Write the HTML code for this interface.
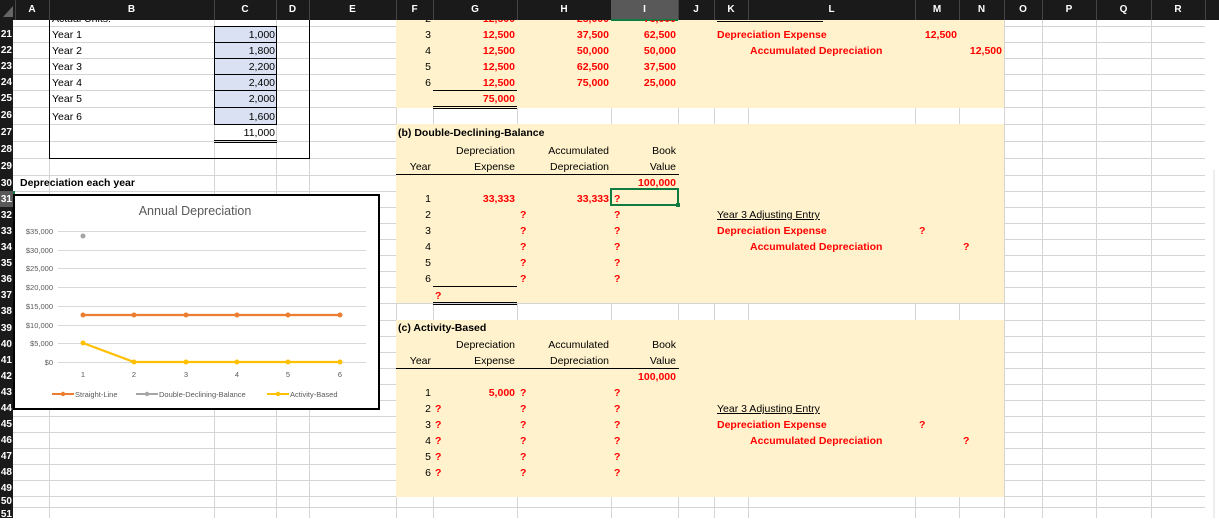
<!DOCTYPE html>
<html><head><meta charset="utf-8"><style>
body{margin:0;width:1219px;height:518px;overflow:hidden;background:#fff;position:relative;font-family:"Liberation Sans",sans-serif;}
.t{position:absolute;font-size:10.5px;line-height:12px;white-space:nowrap;color:#000;}
.r{color:#f00;font-weight:bold;}
.R{text-align:right;}
.h{position:absolute;top:0;height:20px;line-height:20px;color:#fff;font-size:10px;font-weight:bold;text-align:center;}
.rn{position:absolute;left:-3px;width:15px;color:#fff;font-size:10px;font-weight:bold;text-align:right;line-height:12px;}
.clip{position:absolute;left:0;top:20px;width:1219px;height:6px;overflow:hidden;}
.clip .t{top:-7px;}
</style></head><body>
<svg width="1219" height="518" style="position:absolute;left:0;top:0">
<g stroke="#d4d4d4" stroke-width="1">
<line x1="13" x2="1205" y1="26.5" y2="26.5"/><line x1="13" x2="1205" y1="42.5" y2="42.5"/><line x1="13" x2="1205" y1="58.5" y2="58.5"/><line x1="13" x2="1205" y1="74.5" y2="74.5"/><line x1="13" x2="1205" y1="90.5" y2="90.5"/><line x1="13" x2="1205" y1="107.5" y2="107.5"/><line x1="13" x2="1205" y1="124.5" y2="124.5"/><line x1="13" x2="1205" y1="141.5" y2="141.5"/><line x1="13" x2="1205" y1="158.5" y2="158.5"/><line x1="13" x2="1205" y1="175.5" y2="175.5"/><line x1="13" x2="1205" y1="191.5" y2="191.5"/><line x1="13" x2="1205" y1="207.5" y2="207.5"/><line x1="13" x2="1205" y1="223.5" y2="223.5"/><line x1="13" x2="1205" y1="239.5" y2="239.5"/><line x1="13" x2="1205" y1="255.5" y2="255.5"/><line x1="13" x2="1205" y1="271.5" y2="271.5"/><line x1="13" x2="1205" y1="287.5" y2="287.5"/><line x1="13" x2="1205" y1="303.5" y2="303.5"/><line x1="13" x2="1205" y1="320.5" y2="320.5"/><line x1="13" x2="1205" y1="336.5" y2="336.5"/><line x1="13" x2="1205" y1="352.5" y2="352.5"/><line x1="13" x2="1205" y1="368.5" y2="368.5"/><line x1="13" x2="1205" y1="384.5" y2="384.5"/><line x1="13" x2="1205" y1="400.5" y2="400.5"/><line x1="13" x2="1205" y1="416.5" y2="416.5"/><line x1="13" x2="1205" y1="432.5" y2="432.5"/><line x1="13" x2="1205" y1="448.5" y2="448.5"/><line x1="13" x2="1205" y1="464.5" y2="464.5"/><line x1="13" x2="1205" y1="480.5" y2="480.5"/><line x1="13" x2="1205" y1="496.5" y2="496.5"/><line x1="13" x2="1205" y1="507.5" y2="507.5"/>
<line y1="20" y2="518" x1="49.5" x2="49.5"/><line y1="20" y2="518" x1="214.5" x2="214.5"/><line y1="20" y2="518" x1="276.5" x2="276.5"/><line y1="20" y2="518" x1="309.5" x2="309.5"/><line y1="20" y2="518" x1="396.5" x2="396.5"/><line y1="20" y2="518" x1="433.5" x2="433.5"/><line y1="20" y2="518" x1="517.5" x2="517.5"/><line y1="20" y2="518" x1="611.5" x2="611.5"/><line y1="20" y2="518" x1="678.5" x2="678.5"/><line y1="20" y2="518" x1="714.5" x2="714.5"/><line y1="20" y2="518" x1="748.5" x2="748.5"/><line y1="20" y2="518" x1="915.5" x2="915.5"/><line y1="20" y2="518" x1="959.5" x2="959.5"/><line y1="20" y2="518" x1="1004.5" x2="1004.5"/><line y1="20" y2="518" x1="1042.5" x2="1042.5"/><line y1="20" y2="518" x1="1096.5" x2="1096.5"/><line y1="20" y2="518" x1="1151.5" x2="1151.5"/><line y1="20" y2="518" x1="1205.5" x2="1205.5"/>
</g>
<rect x="1205" y="20" width="14" height="498" fill="#fff"/>
<rect x="1213" y="170" width="2" height="348" fill="#eee"/>
<rect x="396" y="20" width="608" height="88" fill="#fff2cc"/>
<rect x="396" y="124" width="608" height="179" fill="#fff2cc"/>
<rect x="396" y="320" width="608" height="177" fill="#fff2cc"/>
<rect x="214" y="26" width="62" height="98" fill="#d9e1f2"/>
<g stroke="#000" stroke-width="1" fill="none">
<rect x="214.5" y="26.5" width="62" height="16"/><rect x="214.5" y="42.5" width="62" height="16"/><rect x="214.5" y="58.5" width="62" height="16"/><rect x="214.5" y="74.5" width="62" height="16"/><rect x="214.5" y="90.5" width="62" height="17"/><rect x="214.5" y="107.5" width="62" height="17"/>
<path d="M49.5 20V158.5H309.5V20"/>
<line x1="214" x2="277" y1="140.5" y2="140.5"/><line x1="214" x2="277" y1="142.5" y2="142.5"/>
<line x1="433" x2="517" y1="90.5" y2="90.5"/><line x1="433" x2="517" y1="106.5" y2="106.5"/><line x1="433" x2="517" y1="108.5" y2="108.5"/>
<line x1="396" x2="679" y1="174.5" y2="174.5"/>
<line x1="433" x2="517" y1="286.5" y2="286.5"/><line x1="433" x2="517" y1="302.5" y2="302.5"/><line x1="433" x2="517" y1="304.5" y2="304.5"/>
<line x1="396" x2="679" y1="368.5" y2="368.5"/>
<line x1="717" x2="823" y1="21.5" y2="21.5"/>
</g>
<rect x="611" y="189" width="67" height="16" fill="none" stroke="#107c41" stroke-width="2"/>
<rect x="676" y="203" width="4" height="4" fill="#107c41"/>
<rect x="0" y="0" width="1219" height="20" fill="#1a1a1a"/>
<rect x="611" y="0" width="67" height="20" fill="#595959"/>
<rect x="611" y="19" width="67" height="2" fill="#107c41"/>
<rect x="0" y="20" width="13" height="498" fill="#1a1a1a"/>
<rect x="0" y="191" width="13" height="16" fill="#595959"/>
<rect x="13" y="191" width="2" height="16" fill="#107c41"/>
<polygon points="3,17 13,17 13,6" fill="#666"/>
<g stroke="#444"><line x1="15.5" x2="15.5" y1="0" y2="20"/><line x1="49.5" x2="49.5" y1="0" y2="20"/><line x1="214.5" x2="214.5" y1="0" y2="20"/><line x1="276.5" x2="276.5" y1="0" y2="20"/><line x1="309.5" x2="309.5" y1="0" y2="20"/><line x1="396.5" x2="396.5" y1="0" y2="20"/><line x1="433.5" x2="433.5" y1="0" y2="20"/><line x1="517.5" x2="517.5" y1="0" y2="20"/><line x1="678.5" x2="678.5" y1="0" y2="20"/><line x1="714.5" x2="714.5" y1="0" y2="20"/><line x1="748.5" x2="748.5" y1="0" y2="20"/><line x1="915.5" x2="915.5" y1="0" y2="20"/><line x1="959.5" x2="959.5" y1="0" y2="20"/><line x1="1004.5" x2="1004.5" y1="0" y2="20"/><line x1="1042.5" x2="1042.5" y1="0" y2="20"/><line x1="1096.5" x2="1096.5" y1="0" y2="20"/><line x1="1151.5" x2="1151.5" y1="0" y2="20"/><line x1="1205.5" x2="1205.5" y1="0" y2="20"/></g>
</svg>
<div class="clip">
<div class="t" style="left:52px">Actual Units:</div>
<div class="t R" style="right:788px">2</div>
<div class="t r R" style="right:704px">12,500</div><div class="t r R" style="right:610px">25,000</div><div class="t r R" style="right:543px">75,000</div>
</div>
<div class="h" style="left:15px;width:34px">A</div><div class="h" style="left:49px;width:165px">B</div><div class="h" style="left:214px;width:62px">C</div><div class="h" style="left:276px;width:33px">D</div><div class="h" style="left:309px;width:87px">E</div><div class="h" style="left:396px;width:37px">F</div><div class="h" style="left:433px;width:84px">G</div><div class="h" style="left:517px;width:94px">H</div><div class="h" style="left:611px;width:67px">I</div><div class="h" style="left:678px;width:36px">J</div><div class="h" style="left:714px;width:34px">K</div><div class="h" style="left:748px;width:167px">L</div><div class="h" style="left:915px;width:44px">M</div><div class="h" style="left:959px;width:45px">N</div><div class="h" style="left:1004px;width:38px">O</div><div class="h" style="left:1042px;width:54px">P</div><div class="h" style="left:1096px;width:55px">Q</div><div class="h" style="left:1151px;width:54px">R</div>
<div class="rn" style="top:29px">21</div><div class="rn" style="top:45px">22</div><div class="rn" style="top:61px">23</div><div class="rn" style="top:77px">24</div><div class="rn" style="top:93px">25</div><div class="rn" style="top:110px">26</div><div class="rn" style="top:127px">27</div><div class="rn" style="top:144px">28</div><div class="rn" style="top:161px">29</div><div class="rn" style="top:178px">30</div><div class="rn" style="top:194px">31</div><div class="rn" style="top:210px">32</div><div class="rn" style="top:226px">33</div><div class="rn" style="top:242px">34</div><div class="rn" style="top:258px">35</div><div class="rn" style="top:274px">36</div><div class="rn" style="top:290px">37</div><div class="rn" style="top:306px">38</div><div class="rn" style="top:323px">39</div><div class="rn" style="top:339px">40</div><div class="rn" style="top:355px">41</div><div class="rn" style="top:371px">42</div><div class="rn" style="top:387px">43</div><div class="rn" style="top:403px">44</div><div class="rn" style="top:419px">45</div><div class="rn" style="top:435px">46</div><div class="rn" style="top:451px">47</div><div class="rn" style="top:467px">48</div><div class="rn" style="top:483px">49</div><div class="rn" style="top:496px">50</div><div class="rn" style="top:509px">51</div>

<div class="t" style="left:52px;top:29px">Year 1</div><div class="t" style="left:52px;top:45px">Year 2</div><div class="t" style="left:52px;top:61px">Year 3</div><div class="t" style="left:52px;top:77px">Year 4</div><div class="t" style="left:52px;top:93px">Year 5</div><div class="t" style="left:52px;top:111px">Year 6</div>
<div class="t R" style="right:944px;top:29px">1,000</div><div class="t R" style="right:944px;top:45px">1,800</div><div class="t R" style="right:944px;top:61px">2,200</div><div class="t R" style="right:944px;top:77px">2,400</div><div class="t R" style="right:944px;top:93px">2,000</div><div class="t R" style="right:944px;top:111px">1,600</div><div class="t R" style="right:944px;top:127px">11,000</div>
<div class="t" style="left:20px;top:177px;font-weight:bold">Depreciation each year</div>

<div style="position:absolute;left:13px;top:194px;width:363px;height:212px;border:2px solid #000;background:#fff"></div>
<svg width="1219" height="518" style="position:absolute;left:0;top:0">
<text x="195" y="215" font-size="12.5" fill="#595959" text-anchor="middle" font-family="Liberation Sans">Annual Depreciation</text>
<g stroke="#d9d9d9"><line x1="58" x2="366" y1="231.5" y2="231.5"/><line x1="58" x2="366" y1="250.5" y2="250.5"/><line x1="58" x2="366" y1="268.5" y2="268.5"/><line x1="58" x2="366" y1="287.5" y2="287.5"/><line x1="58" x2="366" y1="306.5" y2="306.5"/><line x1="58" x2="366" y1="325.5" y2="325.5"/><line x1="58" x2="366" y1="343.5" y2="343.5"/><line x1="58" x2="366" y1="362.5" y2="362.5"/></g>
<g font-size="7.5" fill="#595959" text-anchor="end" font-family="Liberation Sans"><text x="53" y="234">$35,000</text><text x="53" y="253">$30,000</text><text x="53" y="271">$25,000</text><text x="53" y="290">$20,000</text><text x="53" y="309">$15,000</text><text x="53" y="328">$10,000</text><text x="53" y="346">$5,000</text><text x="53" y="365">$0</text></g>
<g font-size="7.5" fill="#595959" text-anchor="middle" font-family="Liberation Sans"><text x="83" y="377">1</text><text x="134" y="377">2</text><text x="186" y="377">3</text><text x="237" y="377">4</text><text x="288" y="377">5</text><text x="340" y="377">6</text></g>
<polyline points="83,315 134,315 186,315 237,315 288,315 340,315" fill="none" stroke="#ed7d31" stroke-width="2.2"/>
<g fill="#ed7d31"><circle cx="83" cy="315" r="2.5"/><circle cx="134" cy="315" r="2.5"/><circle cx="186" cy="315" r="2.5"/><circle cx="237" cy="315" r="2.5"/><circle cx="288" cy="315" r="2.5"/><circle cx="340" cy="315" r="2.5"/></g>
<circle cx="83" cy="236" r="2.5" fill="#a5a5a5"/>
<polyline points="83,343 134,362 186,362 237,362 288,362 340,362" fill="none" stroke="#ffc000" stroke-width="2.2"/>
<g fill="#ffc000"><circle cx="83" cy="343" r="2.5"/><circle cx="134" cy="362" r="2.5"/><circle cx="186" cy="362" r="2.5"/><circle cx="237" cy="362" r="2.5"/><circle cx="288" cy="362" r="2.5"/><circle cx="340" cy="362" r="2.5"/></g>
<line x1="52" x2="74" y1="394" y2="394" stroke="#ed7d31" stroke-width="2"/><circle cx="63" cy="394" r="2.2" fill="#ed7d31"/>
<line x1="136" x2="158" y1="394" y2="394" stroke="#a5a5a5" stroke-width="2"/><circle cx="147" cy="394" r="2.2" fill="#a5a5a5"/>
<line x1="267" x2="289" y1="394" y2="394" stroke="#ffc000" stroke-width="2"/><circle cx="278" cy="394" r="2.2" fill="#ffc000"/>
<g font-size="7.5" fill="#595959" font-family="Liberation Sans"><text x="75" y="397">Straight-Line</text><text x="159" y="397">Double-Declining-Balance</text><text x="290" y="397">Activity-Based</text></g>
</svg>

<div class="t R" style="right:788px;top:29px">3</div><div class="t R" style="right:788px;top:45px">4</div><div class="t R" style="right:788px;top:61px">5</div><div class="t R" style="right:788px;top:77px">6</div>
<div class="t r R" style="right:704px;top:29px">12,500</div><div class="t r R" style="right:704px;top:45px">12,500</div><div class="t r R" style="right:704px;top:61px">12,500</div><div class="t r R" style="right:704px;top:77px">12,500</div><div class="t r R" style="right:704px;top:93px">75,000</div>
<div class="t r R" style="right:610px;top:29px">37,500</div><div class="t r R" style="right:610px;top:45px">50,000</div><div class="t r R" style="right:610px;top:61px">62,500</div><div class="t r R" style="right:610px;top:77px">75,000</div>
<div class="t r R" style="right:543px;top:29px">62,500</div><div class="t r R" style="right:543px;top:45px">50,000</div><div class="t r R" style="right:543px;top:61px">37,500</div><div class="t r R" style="right:543px;top:77px">25,000</div>
<div class="t r" style="left:717px;top:29px">Depreciation Expense</div><div class="t r" style="left:750px;top:45px">Accumulated Depreciation</div>
<div class="t r R" style="right:262px;top:29px">12,500</div><div class="t r R" style="right:217px;top:45px">12,500</div>

<div class="t" style="left:398px;top:127px;font-weight:bold">(b) Double-Declining-Balance</div>
<div class="t R" style="right:704px;top:145px">Depreciation</div><div class="t R" style="right:610px;top:145px">Accumulated</div><div class="t R" style="right:543px;top:145px">Book</div>
<div class="t R" style="right:788px;top:161px">Year</div><div class="t R" style="right:704px;top:161px">Expense</div><div class="t R" style="right:610px;top:161px">Depreciation</div><div class="t R" style="right:543px;top:161px">Value</div>
<div class="t r R" style="right:543px;top:177px">100,000</div>
<div class="t R" style="right:788px;top:193px">1</div><div class="t R" style="right:788px;top:209px">2</div><div class="t R" style="right:788px;top:225px">3</div><div class="t R" style="right:788px;top:241px">4</div><div class="t R" style="right:788px;top:257px">5</div><div class="t R" style="right:788px;top:273px">6</div>
<div class="t r R" style="right:704px;top:193px">33,333</div><div class="t r R" style="right:610px;top:193px">33,333</div><div class="t r" style="left:614px;top:193px">?</div>
<div class="t r" style="left:520px;top:209px">?</div><div class="t r" style="left:520px;top:225px">?</div><div class="t r" style="left:520px;top:241px">?</div><div class="t r" style="left:520px;top:257px">?</div><div class="t r" style="left:520px;top:273px">?</div>
<div class="t r" style="left:614px;top:209px">?</div><div class="t r" style="left:614px;top:225px">?</div><div class="t r" style="left:614px;top:241px">?</div><div class="t r" style="left:614px;top:257px">?</div><div class="t r" style="left:614px;top:273px">?</div>
<div class="t r" style="left:435px;top:290px">?</div>
<div class="t" style="left:717px;top:209px;text-decoration:underline">Year 3 Adjusting Entry</div>
<div class="t r" style="left:717px;top:225px">Depreciation Expense</div><div class="t r" style="left:750px;top:241px">Accumulated Depreciation</div>
<div class="t r" style="left:919px;top:225px">?</div><div class="t r" style="left:963px;top:241px">?</div>

<div class="t" style="left:398px;top:322px;font-weight:bold">(c) Activity-Based</div>
<div class="t R" style="right:704px;top:339px">Depreciation</div><div class="t R" style="right:610px;top:339px">Accumulated</div><div class="t R" style="right:543px;top:339px">Book</div>
<div class="t R" style="right:788px;top:355px">Year</div><div class="t R" style="right:704px;top:355px">Expense</div><div class="t R" style="right:610px;top:355px">Depreciation</div><div class="t R" style="right:543px;top:355px">Value</div>
<div class="t r R" style="right:543px;top:371px">100,000</div>
<div class="t R" style="right:788px;top:387px">1</div><div class="t R" style="right:788px;top:403px">2</div><div class="t R" style="right:788px;top:419px">3</div><div class="t R" style="right:788px;top:435px">4</div><div class="t R" style="right:788px;top:451px">5</div><div class="t R" style="right:788px;top:467px">6</div>
<div class="t r" style="left:435px;top:403px">?</div><div class="t r" style="left:435px;top:419px">?</div><div class="t r" style="left:435px;top:435px">?</div><div class="t r" style="left:435px;top:451px">?</div><div class="t r" style="left:435px;top:467px">?</div>
<div class="t r R" style="right:704px;top:387px">5,000</div><div class="t r" style="left:520px;top:387px">?</div>
<div class="t r" style="left:520px;top:403px">?</div><div class="t r" style="left:520px;top:419px">?</div><div class="t r" style="left:520px;top:435px">?</div><div class="t r" style="left:520px;top:451px">?</div><div class="t r" style="left:520px;top:467px">?</div>
<div class="t r" style="left:614px;top:387px">?</div><div class="t r" style="left:614px;top:403px">?</div><div class="t r" style="left:614px;top:419px">?</div><div class="t r" style="left:614px;top:435px">?</div><div class="t r" style="left:614px;top:451px">?</div><div class="t r" style="left:614px;top:467px">?</div>
<div class="t" style="left:717px;top:403px;text-decoration:underline">Year 3 Adjusting Entry</div>
<div class="t r" style="left:717px;top:419px">Depreciation Expense</div><div class="t r" style="left:750px;top:435px">Accumulated Depreciation</div>
<div class="t r" style="left:919px;top:419px">?</div><div class="t r" style="left:963px;top:435px">?</div>
</body></html>
